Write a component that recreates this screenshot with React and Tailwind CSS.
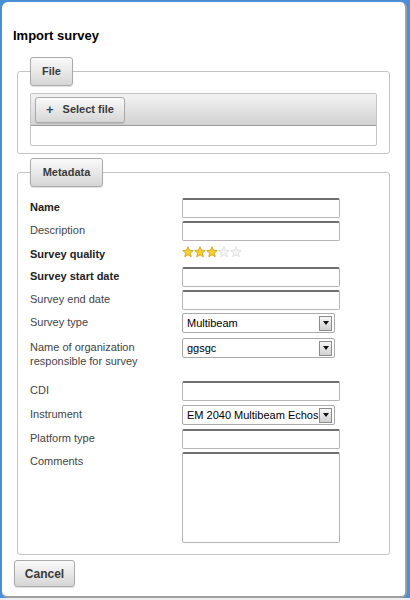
import React from "react";

const font = { fontFamily: '"Liberation Sans", Arial, sans-serif' };

function Star({ on }) {
  return (
    <svg width="12" height="12" viewBox="0 0 24 24">
      <polygon
        points="12,1.5 15.1,8.3 22.5,9.1 16.9,14.1 18.5,21.5 12,17.7 5.5,21.5 7.1,14.1 1.5,9.1 8.9,8.3"
        fill={on ? "#f3cf33" : "#f3f3f3"}
        stroke={on ? "#c79d12" : "#d9d9d9"}
        strokeWidth="1.6"
        strokeLinejoin="round"
      />
    </svg>
  );
}

function TextInput() {
  return (
    <div className="w-[158px] h-[20px] bg-white border border-[#b5b5b5] border-t-[#6f6f6f] border-t-2 rounded-[2px]" />
  );
}

function Select({ value }) {
  return (
    <div className="w-[153px] h-[20px] bg-white border border-[#a9a9a9] rounded-[2px] flex items-center overflow-hidden">
      <span className="flex-1 pl-[4px] text-[11px] text-black whitespace-nowrap overflow-hidden">
        {value}
      </span>
      <span className="w-[13px] h-[15px] mr-[2px] shrink-0 border border-[#8c8c8c] bg-gradient-to-b from-[#f7f7f7] to-[#d0d0d0] flex items-center justify-center">
        <svg width="6" height="4" viewBox="0 0 6 4">
          <polygon points="0,0 6,0 3,4" fill="#111" />
        </svg>
      </span>
    </div>
  );
}

function Btn({ children, className = "" }) {
  return (
    <div
      className={
        "flex items-center justify-center border border-[#aaaaaa] rounded-[3px] bg-gradient-to-b from-[#fafafa] to-[#d6d6d6] text-[11px] font-bold text-[#3a3a3a] shadow-[0_1px_1px_rgba(0,0,0,0.12)] " +
        className
      }
    >
      {children}
    </div>
  );
}

const rows = [
  { label: "Name", bold: true, h: "h-[23px]", field: <TextInput /> },
  { label: "Description", h: "h-[24px]", field: <TextInput /> },
  {
    label: "Survey quality",
    bold: true,
    h: "h-[22px]",
    field: (
      <div className="flex pt-[1px]">
        <Star on />
        <Star on />
        <Star on />
        <Star />
        <Star />
      </div>
    ),
  },
  { label: "Survey start date", bold: true, h: "h-[23px]", field: <TextInput /> },
  { label: "Survey end date", h: "h-[23px]", field: <TextInput /> },
  { label: "Survey type", h: "h-[25px]", field: <Select value="Multibeam" /> },
  {
    label: (
      <>
        Name of organization
        <br />
        responsible for survey
      </>
    ),
    h: "h-[43px]",
    field: <Select value="ggsgc" />,
  },
  { label: "CDI", h: "h-[24px]", field: <TextInput /> },
  { label: "Instrument", h: "h-[24px]", field: <Select value="EM 2040 Multibeam Echos" /> },
  { label: "Platform type", h: "h-[23px]", field: <TextInput /> },
  {
    label: "Comments",
    h: "h-[91px]",
    field: (
      <div className="w-[158px] h-[91px] bg-white border border-[#b5b5b5] border-t-[#6f6f6f] border-t-2 rounded-[2px]" />
    ),
  },
];

export default function App() {
  return (
    <div
      className="h-[600px] w-[410px] bg-[#4a8fd6] pt-[2px] pl-[2px] pr-[3px] border-b-2 border-[#eeeeee]"
      style={font}
    >
      <div className="h-full bg-white rounded-[6px] border-r-2 border-b-2 border-[#a0a0a0] pt-[26px]">
        <h1 className="ml-[11px] text-[13px] leading-[16px] font-bold text-black">Import survey</h1>

        <fieldset className="mt-[13px] mx-[15px] border border-[#c4c4c4] rounded-[3px] px-[12px] pt-[7px] pb-[7px]">
          <legend className="p-0">
            <Btn className="w-[43px] h-[29px]">File</Btn>
          </legend>
          <div className="h-[53px] border border-[#c4c4c4] rounded-[2px] overflow-hidden">
            <div className="h-[32px] bg-gradient-to-b from-[#f3f3f3] to-[#d2d2d2] border-b border-[#9a9a9a] flex items-center pl-[4px]">
              <Btn className="w-[90px] h-[26px] gap-[9px] justify-start pl-[10px]">
                <span className="text-[#2c4a6e] text-[13px] leading-none">+</span>
                <span>Select file</span>
              </Btn>
            </div>
          </div>
        </fieldset>

        <fieldset className="mt-[4px] mx-[15px] border border-[#c4c4c4] rounded-[3px] px-[12px] pt-[11px] pb-[11px]">
          <legend className="p-0">
            <Btn className="w-[73px] h-[29px]">Metadata</Btn>
          </legend>
          <div className="flex flex-col">
            {rows.map((r, i) => (
              <div key={i} className={"flex " + r.h}>
                <div
                  className={
                    "w-[152px] text-[11px] leading-[14px] pt-[2px] " +
                    (r.bold ? "font-bold text-[#222]" : "text-[#444]")
                  }
                >
                  {r.label}
                </div>
                {r.field}
              </div>
            ))}
          </div>
        </fieldset>

        <Btn className="mt-[5px] ml-[12px] w-[61px] h-[27px] text-[12px]">Cancel</Btn>
      </div>
    </div>
  );
}
